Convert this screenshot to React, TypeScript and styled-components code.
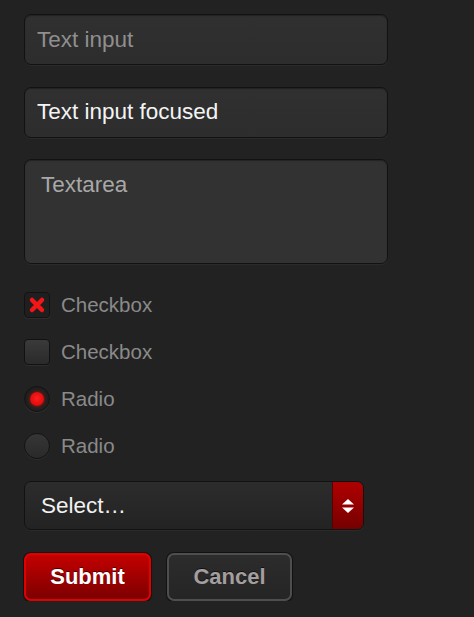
import React from 'react';
import styled, { createGlobalStyle } from 'styled-components';

const GlobalStyle = createGlobalStyle`
  html, body {
    margin: 0;
    padding: 0;
    background: #222222;
    font-family: "Liberation Sans", Arial, Helvetica, sans-serif;
  }
`;

const App: React.FC = () => {
  return (
    <>
      <GlobalStyle />
      <Form>
        <TextInput placeholder="Text input" />
        <TextInput defaultValue="Text input focused" />
        <TextArea placeholder="Textarea" />

        <Options>
          <Option>
            <CheckBox checked>
              <svg width="18" height="18" viewBox="0 0 18 18">
                <path d="M4 4 L14 14 M14 4 L4 14" stroke="#f21616" strokeWidth="4.5" strokeLinecap="round" />
              </svg>
            </CheckBox>
            <Label>Checkbox</Label>
          </Option>
          <Option>
            <CheckBox />
            <Label>Checkbox</Label>
          </Option>
          <Option>
            <Radio checked>
              <Dot />
            </Radio>
            <Label>Radio</Label>
          </Option>
          <Option>
            <Radio />
            <Label>Radio</Label>
          </Option>
        </Options>

        <Select>
          <SelectText>Select…</SelectText>
          <SelectArrow>
            <svg width="14" height="18" viewBox="0 0 14 18">
              <path d="M7 2 L13 7.5 L1 7.5 Z" fill="#ffffff" />
              <path d="M1 10.5 L13 10.5 L7 16 Z" fill="#ffffff" />
            </svg>
          </SelectArrow>
        </Select>

        <Buttons>
          <Button primary>Submit</Button>
          <Button>Cancel</Button>
        </Buttons>
      </Form>
    </>
  );
};

export default App;

const Form = styled.div`
  display: flex;
  flex-direction: column;
  align-items: flex-start;
  padding: 14px 0 0 24px;
  width: 364px;
`;

const fieldBase = `
  box-sizing: border-box;
  width: 364px;
  border: 1px solid #121212;
  border-radius: 7px;
  background: linear-gradient(#303030, #2d2d2d);
  box-shadow: 0 1px 0 rgba(255, 255, 255, 0.04), inset 0 1px 1px rgba(0, 0, 0, 0.3);
  color: #f4f4f4;
  font-family: "Liberation Sans", Arial, Helvetica, sans-serif;
  font-size: 22.5px;
  outline: none;
  &::placeholder {
    color: #8f8f8f;
  }
`;

const TextInput = styled.input`
  ${fieldBase}
  height: 51px;
  padding: 0 12px;
  margin-bottom: 21.5px;
`;

const TextArea = styled.textarea`
  ${fieldBase}
  height: 105px;
  padding: 12px 16px;
  resize: none;
  background: #323232;
  &::placeholder {
    color: #a8a8a8;
  }
`;

const Options = styled.div`
  display: flex;
  flex-direction: column;
  margin-top: 17.5px;
`;

const Option = styled.div`
  display: flex;
  align-items: center;
  gap: 11px;
  height: 47px;
`;

const CheckBox = styled.div<{ checked?: boolean }>`
  box-sizing: border-box;
  width: 26px;
  height: 26px;
  border: 1px solid #121212;
  border-radius: 4px;
  display: flex;
  align-items: center;
  justify-content: center;
  background: ${(p) => (p.checked ? '#1f1f1f' : 'linear-gradient(#3a3a3a, #2a2a2a)')};
  box-shadow: 0 1px 0 rgba(255, 255, 255, 0.05);
`;

const Radio = styled.div<{ checked?: boolean }>`
  box-sizing: border-box;
  width: 26px;
  height: 26px;
  border-radius: 50%;
  border: 1px solid #141414;
  display: flex;
  align-items: center;
  justify-content: center;
  background: ${(p) => (p.checked ? '#1f1f1f' : 'linear-gradient(#363636, #2a2a2a)')};
  box-shadow: 0 1px 0 rgba(255, 255, 255, 0.05);
`;

const Dot = styled.span`
  width: 14px;
  height: 14px;
  border-radius: 50%;
  background: radial-gradient(circle at 50% 45%, #ff2020, #d40000);
  box-shadow: 0 0 4px rgba(255, 20, 20, 0.6);
`;

const Label = styled.span`
  color: #8a8a8a;
  font-size: 20.5px;
`;

const Select = styled.div`
  box-sizing: border-box;
  width: 340px;
  height: 49px;
  margin-top: 11.5px;
  display: flex;
  border: 1px solid #121212;
  border-radius: 7px;
  overflow: hidden;
  background: linear-gradient(#2c2c2c, #232323);
  box-shadow: 0 1px 0 rgba(255, 255, 255, 0.04);
`;

const SelectText = styled.span`
  flex: 1;
  display: flex;
  align-items: center;
  padding-left: 16px;
  color: #f2f2f2;
  font-size: 22.5px;
`;

const SelectArrow = styled.span`
  width: 30px;
  display: flex;
  align-items: center;
  justify-content: center;
  border-left: 1px solid #5a0000;
  background: linear-gradient(#b00000, #750000);
`;

const Buttons = styled.div`
  display: flex;
  gap: 16px;
  margin-top: 22.5px;
`;

const Button = styled.button<{ primary?: boolean }>`
  box-sizing: border-box;
  height: 48px;
  width: ${(p) => (p.primary ? '127px' : '125px')};
  border-radius: 7px;
  font-family: "Liberation Sans", Arial, Helvetica, sans-serif;
  font-size: 22px;
  font-weight: bold;
  cursor: pointer;
  border: 2px solid ${(p) => (p.primary ? '#e10000' : '#4e4e4e')};
  background: ${(p) =>
    p.primary ? 'linear-gradient(#c40000, #7c0000)' : 'linear-gradient(#2c2c2c, #252525)'};
  color: ${(p) => (p.primary ? '#ffffff' : '#a49e9e')};
  text-shadow: 0 -1px 0 rgba(0, 0, 0, 0.6);
  box-shadow: 0 0 0 1px #121212, 0 2px 2px rgba(0, 0, 0, 0.4);
`;
